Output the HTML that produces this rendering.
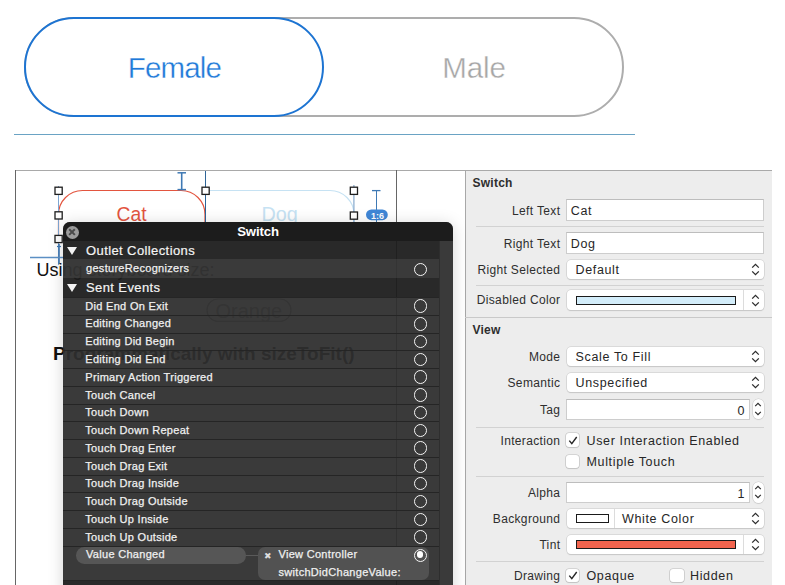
<!DOCTYPE html>
<html><head><meta charset="utf-8">
<style>
*{margin:0;padding:0;box-sizing:border-box}
html,body{width:785px;height:585px;overflow:hidden;background:#fff;font-family:"Liberation Sans",sans-serif}
.a{position:absolute}
/* segmented */
#seg-grey{left:24px;top:17px;width:600px;height:100px;border:2px solid #adadad;border-radius:50px}
#seg-blue{left:24px;top:17px;width:300px;height:100px;border:2px solid #1d74d2;border-radius:50px;background:#fff}
.segtxt{font-size:29.5px;top:50px;line-height:36px;text-align:center;white-space:nowrap;-webkit-text-stroke:0.35px #fff;paint-order:normal}
#underline{left:14px;top:134px;width:621px;height:1px;background:#6aa3c4}
/* canvas */
#topline{left:15px;top:170px;width:757px;height:1px;background:#a9a9a9}
#leftline{left:15px;top:170px;width:1px;height:415px;background:#666}
#rightline{left:396px;top:170px;width:1px;height:415px;background:#666}
/* inspector */
#insp{left:465px;top:170px;width:307px;height:415px;background:#ededed;border-left:1px solid #a8a8a8;border-top:1px solid #a9a9a9}
.lbl{font-size:12px;line-height:15px;letter-spacing:0.35px;color:#2e2e2e;text-align:right;width:120.35px;left:440px;white-space:nowrap}
.hdr{font-size:12px;line-height:15px;letter-spacing:0.25px;font-weight:bold;color:#2e2e2e;left:472.5px;white-space:nowrap}
.field{left:566px;width:198px;background:#fff;border:1px solid #cdcdcd;border-top-color:#bdbdbd}
.ftxt{font-size:12.5px;line-height:15px;letter-spacing:0.65px;color:#262626;white-space:nowrap}
.popup{left:566.5px;width:197.2px;background:#fff;border-radius:4px;box-shadow:0 0 0 0.6px #cbcbcb,0 0.8px 1px rgba(0,0,0,0.18)}
.stepper{background:#fff;border-radius:6px;box-shadow:0 0 0 0.6px #cbcbcb,0 0.8px 1px rgba(0,0,0,0.15)}
.swatch{border:1.4px solid #1a1a1a}
.pdiv{top:0;width:1px;height:100%;background:#dcdcdc}
.sep{left:476px;width:288px;height:1px;background:#d2d2d2}
.cb{width:13.4px;height:13.6px;background:#fff;border-radius:3px;box-shadow:0 0 0 0.6px #bdbdbd,0 0.8px 1px rgba(0,0,0,0.15)}
/* HUD */
#hud{left:63px;top:222px;width:390px;height:380px;border-radius:7px 7px 0 0;overflow:hidden;background:rgba(40,40,40,0.9);box-shadow:0 2px 16px rgba(0,0,0,0.17)}
.tb{background:#1c1c1c}
.close{width:13.2px;height:13.2px;border-radius:50%;background:#9c9c9c}
.close:before,.close:after{content:"";position:absolute;left:2.6px;top:5.6px;width:8px;height:2.1px;background:#4a4a4a;transform:rotate(45deg)}
.close:after{transform:rotate(-45deg)}
.title{text-align:center;color:#fff;font-size:13.2px;letter-spacing:-0.15px;font-weight:bold;line-height:16px}
.hrow{left:0;width:375.5px;background:rgba(12,12,12,0.4)}
.irow{left:0;width:375.5px;background:rgba(56,56,56,0.4)}
.sepr{left:0;width:375.5px;height:1px;background:rgba(36,36,36,0.92)}
.tri{width:0;height:0;border-left:5px solid transparent;border-right:5px solid transparent;border-top:8.5px solid #f4f4f4}
.htxt{color:#f4f4f4;font-size:13px;letter-spacing:0.4px;-webkit-text-stroke:0.2px #f4f4f4;line-height:16px;white-space:nowrap}
.itxt{color:#f0f0f0;font-size:11px;letter-spacing:0.3px;-webkit-text-stroke:0.25px #f0f0f0;line-height:13px;white-space:nowrap}
.ring{width:13.4px;height:13.4px;border:1.9px solid #f6f6f6;border-radius:50%}
.filled div{position:absolute;left:1.6px;top:1.6px;width:6.3px;height:6.3px;border-radius:50%;background:#fff}
.vpill{width:170px;height:16.5px;border-radius:8.25px;background:#565656}
.bubble{width:171px;height:32.5px;border-radius:7px;background:#525252}
.xmark{color:#ddd;font-size:9px;line-height:12px}
.track{background:rgba(58,58,58,0.75);border-left:1px solid rgba(44,44,44,0.8)}
</style></head><body>

<!-- segmented control -->
<div class="a" id="seg-grey"></div>
<div class="a" id="seg-blue"></div>
<div class="a segtxt" style="left:24px;width:300px;color:#2079d8;letter-spacing:-0.85px;text-indent:0.85px">Female</div>
<div class="a segtxt" style="left:324px;width:300px;color:#a6a6a6;letter-spacing:-0.15px">Male</div>
<div class="a" id="underline"></div>

<!-- storyboard canvas -->
<div class="a" id="topline"></div>
<div class="a" id="leftline"></div>
<div class="a" id="rightline"></div>

<!-- canvas items -->
<svg class="a" style="left:0;top:0" width="465" height="585">
  <!-- dog pill -->
  <path d="M205 190.5 H330 A24 24 0 0 1 354 214.5 V240" fill="none" stroke="#c6e2f3" stroke-width="1.2"/>
    <!-- cat pill -->
  <path d="M58.5 240 V214.5 A24 24 0 0 1 82.5 190.5 H181 A24 24 0 0 1 205 214.5 V240" fill="none" stroke="#e3553f" stroke-width="1.2"/>
  <line x1="58.5" y1="186" x2="58.5" y2="265" stroke="#7ea6d2" stroke-width="1"/>
  <line x1="59" y1="244" x2="59" y2="264" stroke="#3f79b4" stroke-width="1.6"/>
  <line x1="57" y1="246.5" x2="61" y2="246.5" stroke="#3f79b4" stroke-width="1.2"/>
  <line x1="205.5" y1="171" x2="205.5" y2="240" stroke="#2f6597" stroke-width="1"/>
  <line x1="353.9" y1="185" x2="353.9" y2="240" stroke="#8eaed0" stroke-width="1.3"/>
  <line x1="30" y1="257.5" x2="64" y2="257.5" stroke="#5b8fc4" stroke-width="1.3"/>
  <!-- I beam -->
  <line x1="181.7" y1="172.5" x2="181.7" y2="190" stroke="#3f79b4" stroke-width="1.6"/>
  <line x1="177.5" y1="172.8" x2="186" y2="172.8" stroke="#3f79b4" stroke-width="1.5"/>
  <line x1="177.5" y1="189.6" x2="186" y2="189.6" stroke="#3f79b4" stroke-width="1.5"/>
  <!-- right constraint -->
  <line x1="376.5" y1="190" x2="376.5" y2="240" stroke="#3f79b4" stroke-width="1"/>
  <line x1="372" y1="190.6" x2="380.5" y2="190.6" stroke="#3f79b4" stroke-width="1.3"/>
  <rect x="366" y="209.4" width="21.8" height="10.8" rx="5.4" fill="#3f86d6"/>
  <text x="377.5" y="218.5" font-family="Liberation Sans" font-size="9" font-weight="bold" fill="#fff" text-anchor="middle">1:6</text>
  <!-- handles -->
  <g fill="#fff" stroke="#1e1e1e" stroke-width="1.3">
    <rect x="55" y="187.2" width="7.2" height="7.2"/>
    <rect x="55" y="211.8" width="7.2" height="7.2"/>
    <rect x="55" y="235.4" width="7.2" height="7.2"/>
    <rect x="202" y="187.2" width="7.2" height="7.2"/>
    <rect x="350.3" y="187.2" width="7.2" height="7.2"/>
    <rect x="350.3" y="212" width="7.2" height="7.2"/>
  </g>
  <text x="116.5" y="221.2" font-family="Liberation Sans" font-size="19.3" fill="#e3553f">Cat</text>
  <text x="261.5" y="221.2" font-family="Liberation Sans" font-size="19.8" fill="#c6e2f3">Dog</text>
  <text x="36.5" y="275.5" font-family="Liberation Sans" font-size="18" fill="#111">Using storyboard size:</text>
  <rect x="207" y="299" width="84" height="22.3" rx="11" fill="none" stroke="#8a8a8a" stroke-width="1.2"/>
  <text x="215.5" y="318" font-family="Liberation Sans" font-size="20" fill="#8a8a8a">Orange</text>
  <text x="53" y="359.8" font-family="Liberation Sans" font-size="19" font-weight="bold" fill="#111">Programmatically with sizeToFit()</text>
</svg>

<!-- inspector -->
<div class="a" id="insp"></div>
<div class="a hdr" style="top:175.70px">Switch</div>
<div class="a lbl" style="top:204.10px">Left Text</div>
<div class="a field" style="top:199.00px;height:22.00px;width:198.00px"><div class="a ftxt" style="left:3.80px;top:4.40px">Cat</div></div>
<div class="a sep" style="top:226.00px"></div>
<div class="a lbl" style="top:237.10px">Right Text</div>
<div class="a field" style="top:232.00px;height:22.00px;width:198.00px"><div class="a ftxt" style="left:3.80px;top:4.40px">Dog</div></div>
<div class="a lbl" style="top:262.50px">Right Selected</div>
<div class="a popup" style="top:259.60px;height:19.70px"><div class="a ftxt" style="left:9.00px;top:3.00px">Default</div><svg class="a" style="right:4px;top:3.35px" width="9" height="13" viewBox="0 0 9 13"><path d="M1.2 4.6 L4.5 1.3 L7.8 4.6 M1.2 8.4 L4.5 11.7 L7.8 8.4" fill="none" stroke="#2c2c2c" stroke-width="1.3"/></svg></div>
<div class="a sep" style="top:285.00px"></div>
<div class="a lbl" style="top:293.20px">Disabled Color</div>
<div class="a popup" style="top:290.40px;height:19.70px"><div class="a swatch" style="left:9px;top:5.6px;width:160px;height:9px;background:#d3edfa"></div><div class="a pdiv" style="left:176.5px"></div><svg class="a" style="right:4px;top:3.35px" width="9" height="13" viewBox="0 0 9 13"><path d="M1.2 4.6 L4.5 1.3 L7.8 4.6 M1.2 8.4 L4.5 11.7 L7.8 8.4" fill="none" stroke="#2c2c2c" stroke-width="1.3"/></svg></div>
<div class="a" style="left:465px;top:317px;width:307px;height:1px;background:#c9c9c9"></div>
<div class="a hdr" style="top:323.20px">View</div>
<div class="a lbl" style="top:349.90px">Mode</div>
<div class="a popup" style="top:346.80px;height:19.20px"><div class="a ftxt" style="left:9.00px;top:3.00px">Scale To Fill</div><svg class="a" style="right:4px;top:3.10px" width="9" height="13" viewBox="0 0 9 13"><path d="M1.2 4.6 L4.5 1.3 L7.8 4.6 M1.2 8.4 L4.5 11.7 L7.8 8.4" fill="none" stroke="#2c2c2c" stroke-width="1.3"/></svg></div>
<div class="a lbl" style="top:376.20px">Semantic</div>
<div class="a popup" style="top:373.00px;height:19.00px"><div class="a ftxt" style="left:9.00px;top:3.00px">Unspecified</div><svg class="a" style="right:4px;top:3.00px" width="9" height="13" viewBox="0 0 9 13"><path d="M1.2 4.6 L4.5 1.3 L7.8 4.6 M1.2 8.4 L4.5 11.7 L7.8 8.4" fill="none" stroke="#2c2c2c" stroke-width="1.3"/></svg></div>
<div class="a lbl" style="top:403.20px">Tag</div>
<div class="a field" style="top:398.50px;height:21.50px;width:183.60px"><div class="a ftxt" style="right:3.50px;top:4.40px">0</div></div>
<div class="a stepper" style="left:752.7px;top:399.00px;width:11px;height:20.00px"><svg class="a" style="left:1.5px;top:3.00px" width="8" height="14" viewBox="0 0 8 14"><path d="M1.2 4.2 L4 1.4 L6.8 4.2 M1.2 9.8 L4 12.6 L6.8 9.8" fill="none" stroke="#2c2c2c" stroke-width="1.2"/></svg></div>
<div class="a sep" style="top:426.50px"></div>
<div class="a lbl" style="top:433.70px">Interaction</div>
<div class="a cb" style="left:566.00px;top:433.20px"><svg class="a" style="left:2px;top:2.5px" width="10" height="9" viewBox="0 0 10 9"><path d="M1.3 4.6 L3.8 7.6 L8.7 1.0" fill="none" stroke="#262626" stroke-width="1.4"/></svg></div>
<div class="a ftxt" style="left:586.50px;top:433.70px">User Interaction Enabled</div>
<div class="a cb" style="left:566.00px;top:454.60px"></div>
<div class="a ftxt" style="left:586.50px;top:454.90px">Multiple Touch</div>
<div class="a sep" style="top:475.70px"></div>
<div class="a lbl" style="top:486.20px">Alpha</div>
<div class="a field" style="top:481.50px;height:21.50px;width:183.60px"><div class="a ftxt" style="right:3.50px;top:4.40px">1</div></div>
<div class="a stepper" style="left:752.7px;top:482.00px;width:11px;height:20.50px"><svg class="a" style="left:1.5px;top:3.25px" width="8" height="14" viewBox="0 0 8 14"><path d="M1.2 4.2 L4 1.4 L6.8 4.2 M1.2 9.8 L4 12.6 L6.8 9.8" fill="none" stroke="#2c2c2c" stroke-width="1.2"/></svg></div>
<div class="a lbl" style="top:511.80px">Background</div>
<div class="a popup" style="top:508.90px;height:19.40px"><div class="a swatch" style="left:9px;top:5.6px;width:33px;height:8.5px;background:#fff"></div><div class="a pdiv" style="left:47.5px"></div><div class="a ftxt" style="left:55.50px;top:3.00px">White Color</div><svg class="a" style="right:4px;top:3.20px" width="9" height="13" viewBox="0 0 9 13"><path d="M1.2 4.6 L4.5 1.3 L7.8 4.6 M1.2 8.4 L4.5 11.7 L7.8 8.4" fill="none" stroke="#2c2c2c" stroke-width="1.3"/></svg></div>
<div class="a lbl" style="top:537.60px">Tint</div>
<div class="a popup" style="top:534.70px;height:19.70px"><div class="a swatch" style="left:9px;top:5.6px;width:160px;height:8.5px;background:#f2644e"></div><div class="a pdiv" style="left:176.5px"></div><svg class="a" style="right:4px;top:3.35px" width="9" height="13" viewBox="0 0 9 13"><path d="M1.2 4.6 L4.5 1.3 L7.8 4.6 M1.2 8.4 L4.5 11.7 L7.8 8.4" fill="none" stroke="#2c2c2c" stroke-width="1.3"/></svg></div>
<div class="a sep" style="top:561.40px"></div>
<div class="a lbl" style="top:569.20px">Drawing</div>
<div class="a cb" style="left:566.00px;top:568.50px"><svg class="a" style="left:2px;top:2.5px" width="10" height="9" viewBox="0 0 10 9"><path d="M1.3 4.6 L3.8 7.6 L8.7 1.0" fill="none" stroke="#262626" stroke-width="1.4"/></svg></div>
<div class="a ftxt" style="left:586.50px;top:569.20px">Opaque</div>
<div class="a cb" style="left:670.30px;top:568.50px"></div>
<div class="a ftxt" style="left:690.00px;top:569.20px">Hidden</div>
<!-- HUD -->
<div class="a" id="hud">
<div class="a tb" style="left:0;top:0;width:390px;height:19px"></div>
<div class="a close" style="left:2.9px;top:3.7px"></div>
<div class="a title" style="left:0;top:1.50px;width:390px">Switch</div>
<div class="a hrow" style="top:19px;height:18px"></div>
<div class="a tri" style="left:4.2px;top:25.3px"></div>
<div class="a htxt" style="left:23px;top:21px">Outlet Collections</div>
<div class="a irow" style="top:37px;height:19px;background:rgba(56,56,56,0.62)"></div>
<div class="a itxt" style="left:23px;top:40px">gestureRecognizers</div>
<div class="a ring" style="left:351px;top:40.5px"></div>
<div class="a hrow" style="top:56px;height:19px"></div>
<div class="a tri" style="left:4.2px;top:62.3px"></div>
<div class="a htxt" style="left:23px;top:58px">Sent Events</div>
<div class="a irow" style="top:75.20px;height:17.76px"></div>
<div class="a sepr" style="top:75.00px"></div>
<div class="a itxt" style="left:22.3px;top:77.70px">Did End On Exit</div>
<div class="a ring" style="left:350.8px;top:77.40px"></div>
<div class="a irow" style="top:92.96px;height:17.76px"></div>
<div class="a sepr" style="top:92.76px"></div>
<div class="a itxt" style="left:22.3px;top:95.46px">Editing Changed</div>
<div class="a ring" style="left:350.8px;top:95.16px"></div>
<div class="a irow" style="top:110.72px;height:17.76px"></div>
<div class="a sepr" style="top:110.52px"></div>
<div class="a itxt" style="left:22.3px;top:113.22px">Editing Did Begin</div>
<div class="a ring" style="left:350.8px;top:112.92px"></div>
<div class="a irow" style="top:128.48px;height:17.76px"></div>
<div class="a sepr" style="top:128.28px"></div>
<div class="a itxt" style="left:22.3px;top:130.98px">Editing Did End</div>
<div class="a ring" style="left:350.8px;top:130.68px"></div>
<div class="a irow" style="top:146.24px;height:17.76px"></div>
<div class="a sepr" style="top:146.04px"></div>
<div class="a itxt" style="left:22.3px;top:148.74px">Primary Action Triggered</div>
<div class="a ring" style="left:350.8px;top:148.44px"></div>
<div class="a irow" style="top:164.00px;height:17.76px"></div>
<div class="a sepr" style="top:163.80px"></div>
<div class="a itxt" style="left:22.3px;top:166.50px">Touch Cancel</div>
<div class="a ring" style="left:350.8px;top:166.20px"></div>
<div class="a irow" style="top:181.76px;height:17.76px"></div>
<div class="a sepr" style="top:181.56px"></div>
<div class="a itxt" style="left:22.3px;top:184.26px">Touch Down</div>
<div class="a ring" style="left:350.8px;top:183.96px"></div>
<div class="a irow" style="top:199.52px;height:17.76px"></div>
<div class="a sepr" style="top:199.32px"></div>
<div class="a itxt" style="left:22.3px;top:202.02px">Touch Down Repeat</div>
<div class="a ring" style="left:350.8px;top:201.72px"></div>
<div class="a irow" style="top:217.28px;height:17.76px"></div>
<div class="a sepr" style="top:217.08px"></div>
<div class="a itxt" style="left:22.3px;top:219.78px">Touch Drag Enter</div>
<div class="a ring" style="left:350.8px;top:219.48px"></div>
<div class="a irow" style="top:235.04px;height:17.76px"></div>
<div class="a sepr" style="top:234.84px"></div>
<div class="a itxt" style="left:22.3px;top:237.54px">Touch Drag Exit</div>
<div class="a ring" style="left:350.8px;top:237.24px"></div>
<div class="a irow" style="top:252.80px;height:17.76px"></div>
<div class="a sepr" style="top:252.60px"></div>
<div class="a itxt" style="left:22.3px;top:255.30px">Touch Drag Inside</div>
<div class="a ring" style="left:350.8px;top:255.00px"></div>
<div class="a irow" style="top:270.56px;height:17.76px"></div>
<div class="a sepr" style="top:270.36px"></div>
<div class="a itxt" style="left:22.3px;top:273.06px">Touch Drag Outside</div>
<div class="a ring" style="left:350.8px;top:272.76px"></div>
<div class="a irow" style="top:288.32px;height:17.76px"></div>
<div class="a sepr" style="top:288.12px"></div>
<div class="a itxt" style="left:22.3px;top:290.82px">Touch Up Inside</div>
<div class="a ring" style="left:350.8px;top:290.52px"></div>
<div class="a irow" style="top:306.08px;height:17.76px"></div>
<div class="a sepr" style="top:305.88px"></div>
<div class="a itxt" style="left:22.3px;top:308.58px">Touch Up Outside</div>
<div class="a ring" style="left:350.8px;top:308.28px"></div>
<div class="a irow" style="top:323.84px;height:34.16px"></div>
<div class="a sepr" style="top:323.64px"></div>
<div class="a vpill" style="left:13px;top:325.30px"></div>
<div class="a itxt" style="left:23px;top:326.34px">Value Changed</div>
<div class="a" style="left:183px;top:333.00px;width:12px;height:1px;background:#5a5a5a"></div>
<div class="a bubble" style="left:194.5px;top:325.40px"></div>
<div class="a xmark" style="left:201px;top:327.50px">&#x2716;</div>
<div class="a itxt" style="left:215.5px;top:326.34px">View Controller</div>
<div class="a itxt" style="left:215.5px;top:343.84px">switchDidChangeValue:</div>
<div class="a ring filled" style="left:351px;top:326.70px"><div></div></div>
<div class="a hrow" style="top:358.00px;height:30px"></div>
<div class="a sepr" style="top:357.50px"></div>
<div class="a htxt" style="left:23px;top:360.80px">Referencing Outlets</div>
<div class="a track" style="left:375.5px;top:19px;width:14.5px;height:400px"></div>
</div>
<!-- /HUD -->
</body></html>
